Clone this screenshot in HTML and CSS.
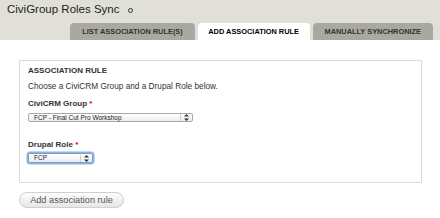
FILE: index.html
```html
<!DOCTYPE html>
<html>
  <head>
    <title>CiviGroup Roles Sync</title>
    <link rel="stylesheet" href="styles.css">
  </head>
  <body>

    <div class="header">
      <h1>CiviGroup Roles Sync <span class="gear"></span></h1>
      <ul class="tabs">
        <li><a href="#">List association rule(s)</a></li>
        <li class="active"><a href="#">Add association rule</a></li>
        <li><a href="#">Manually synchronize</a></li>
      </ul>
    </div>

    <div class="content">
      <div class="fieldset">
        <div class="legend">Association rule</div>
        <p class="help">Choose a CiviCRM Group and a Drupal Role below.</p>

        <label>CiviCRM Group <span class="req">*</span></label>
        <div class="select wide">
          <span class="value">FCP - Final Cut Pro Workshop</span>
          <svg class="arrows" width="5" height="7" viewBox="0 0 5 7"><path d="M2.5 0 L5 2.6 L0 2.6 Z M2.5 7 L5 4.4 L0 4.4 Z" fill="#333"/></svg>
        </div>

        <label class="role">Drupal Role <span class="req">*</span></label>
        <div class="select narrow focus">
          <span class="value">FCP</span>
          <svg class="arrows" width="5" height="7" viewBox="0 0 5 7"><path d="M2.5 0 L5 2.6 L0 2.6 Z M2.5 7 L5 4.4 L0 4.4 Z" fill="#333"/></svg>
        </div>
      </div>

      <button class="submit">Add association rule</button>
    </div>

  </body>
</html>
```

FILE: styles.css
```css
body {
  margin: 0;
  background-color: #ffffff;
  color: #333333;
  font-family: "Liberation Sans", Arial, sans-serif;
}

.header {
  background-color: #e0e0d8;
  padding: 2px 7px 0 7px;
  height: 38px;
}

.header h1 {
  margin: 0;
  font-size: 11.5px;
  line-height: 15px;
  font-weight: normal;
  color: #222222;
}

.gear {
  display: inline-block;
  width: 3px;
  height: 3px;
  border: 1.5px solid #333333;
  border-radius: 50%;
  margin-left: 5px;
  vertical-align: 0;
}

.tabs {
  list-style: none;
  margin: 6px 0 0 0;
  padding: 0;
  display: flex;
  justify-content: flex-end;
  gap: 3px;
}

.tabs li a {
  display: block;
  height: 17px;
  line-height: 17px;
  padding: 0 12px;
  background-color: #a9a9a1;
  border-radius: 4px 4px 0 0;
  color: #333333;
  font-size: 7.4px;
  font-weight: bold;
  text-transform: uppercase;
  text-decoration: none;
}

.tabs li.active a {
  background-color: #ffffff;
  color: #000000;
  padding: 0 10.5px;
}

.content {
  padding: 20px 18px 0 19px;
}

.fieldset {
  border: 1px solid #dcdcdc;
  padding: 5px 8px 19px 8px;
}

.legend {
  font-size: 8px;
  line-height: 10px;
  font-weight: bold;
  text-transform: uppercase;
  color: #333333;
}

.help {
  margin: 5px 0 0 0;
  font-size: 8.25px;
  line-height: 11px;
  color: #333333;
}

label {
  display: block;
  margin-top: 7px;
  font-size: 8px;
  line-height: 10px;
  font-weight: bold;
  color: #333333;
}

label.role {
  margin-top: 18px;
}

.req {
  color: #ee0000;
}

.select {
  position: relative;
  box-sizing: border-box;
  margin-top: 4px;
  height: 9px;
  border: 1px solid #a8a8a8;
  border-radius: 2px;
  background: linear-gradient(#ffffff, #ececec);
  font-size: 6.5px;
  line-height: 7px;
  color: #222222;
  padding-left: 5px;
}

.select.wide {
  width: 165px;
}

.select.narrow {
  width: 65px;
  height: 10px;
  margin-top: 3px;
  line-height: 8px;
  box-shadow: 0 0 0 1.5px #8db4e6;
  border-color: #7a9ccc;
}

.select .arrows {
  position: absolute;
  right: 3px;
  top: 50%;
  margin-top: -3.5px;
  padding-left: 3px;
  border-left: 1px solid #cfcfcf;
}

.submit {
  margin-top: 9px;
  width: 105px;
  height: 16px;
  padding: 0;
  border: 1px solid #cfcfcf;
  border-radius: 8px;
  background: linear-gradient(#fdfdfd, #e6e6e6);
  font-family: "Liberation Sans", Arial, sans-serif;
  font-size: 9.2px;
  color: #555555;
}
```
